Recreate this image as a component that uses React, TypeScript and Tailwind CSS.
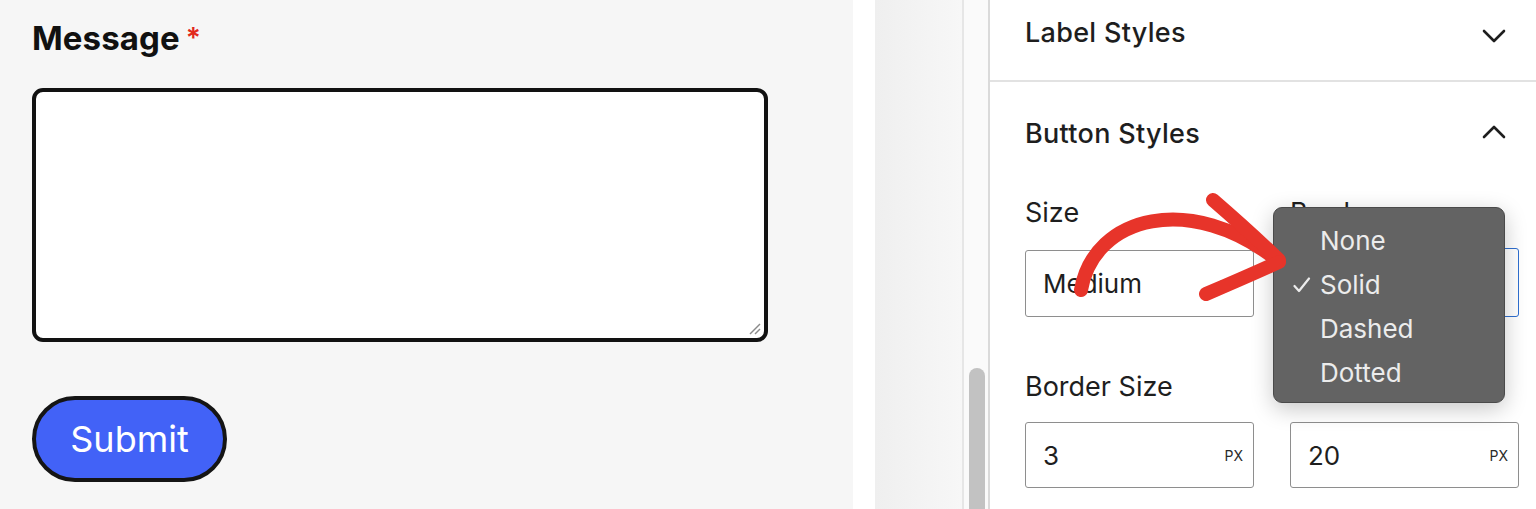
import React from 'react';

function Chevron({ up }: { up?: boolean }) {
  return (
    <svg width="24" height="14" viewBox="0 0 24 14" fill="none">
      <polyline
        points={up ? '2,12 12,2 22,12' : '2,2 12,12 22,2'}
        stroke="#1e1e1e"
        strokeWidth="2.6"
        strokeLinecap="round"
        strokeLinejoin="round"
      />
    </svg>
  );
}

function LeftPanel() {
  return (
    <div className="w-[853px] shrink-0 bg-[#f6f6f6] pl-[32px] pt-[22px]">
      <div className="flex items-start text-[33px] leading-[32px] font-bold text-[#111] tracking-[0.1px]">
        Message
        <span className="ml-[6px] text-[28px] font-semibold text-[#e2281d]">*</span>
      </div>
      <div className="relative mt-[34px] h-[254px] w-[736px] rounded-[11px] border-[4px] border-[#121212] bg-white">
        <svg className="absolute bottom-[3px] right-[3px]" width="14" height="14" viewBox="0 0 14 14">
          <line x1="3" y1="13" x2="13" y2="3" stroke="#8a8a8a" strokeWidth="1.4" />
          <line x1="8" y1="13" x2="13" y2="8" stroke="#8a8a8a" strokeWidth="1.4" />
        </svg>
      </div>
      <button className="mt-[54px] flex h-[86px] w-[195px] items-center justify-center rounded-full border-[4px] border-[#151515] bg-[#4262f7] text-[36px] font-normal text-white">
        Submit
      </button>
    </div>
  );
}

function Field({ value }: { value: string }) {
  return (
    <div className="flex h-[66px] items-center justify-between rounded-[3px] border border-[#8e8e8e] pl-[17px] pr-[10px]">
      <span className="text-[26px]">{value}</span>
      <span className="text-[14px] text-[#2a2a2a]">PX</span>
    </div>
  );
}

function RightPanel() {
  return (
    <div className="relative flex-1 bg-white">
      <div className="flex h-[82px] items-start justify-between border-b-2 border-[#e2e2e2] pl-[35px] pr-[30px] pt-[17px]">
        <span className="text-[27px] leading-[32px] font-medium tracking-[0.3px]">Label Styles</span>
        <div className="mt-[12px]">
          <Chevron />
        </div>
      </div>
      <div className="flex items-start justify-between pl-[35px] pr-[30px] pt-[36px]">
        <span className="text-[27px] leading-[32px] font-medium tracking-[0.3px]">Button Styles</span>
        <div className="mt-[7px]">
          <Chevron up />
        </div>
      </div>
      <div className="grid grid-cols-[229px_229px] gap-x-[36px] pl-[35px] pt-[47px]">
        <div className="text-[27px] leading-[32px]">Size</div>
        <div className="text-[27px] leading-[32px]">Border</div>
        <div className="mt-[21px] flex h-[67px] items-center justify-between rounded-[3px] border border-[#8e8e8e] pl-[17px] pr-[22px]">
          <span className="text-[26px]">Medium</span>
          <svg width="12" height="8" viewBox="0 0 12 8" fill="none">
            <polyline points="1,1 6,6 11,1" stroke="#1e1e1e" strokeWidth="1.6" />
          </svg>
        </div>
        <div className="mt-[19px] h-[69px] rounded-[3px] border-[1.5px] border-[#2f6fd0]" />
      </div>
      <div className="grid grid-cols-[229px_229px] gap-x-[36px] pl-[35px] pt-[54px]">
        <div className="col-span-2 text-[27px] leading-[32px]">Border Size</div>
        <div className="mt-[19px]">
          <Field value="3" />
        </div>
        <div className="mt-[19px]">
          <Field value="20" />
        </div>
      </div>

      <div className="absolute left-[283px] top-[207px] h-[196px] w-[232px] rounded-[9px] border border-[#4a4a4a] bg-[#636363] pt-[10px] shadow-[0_6px_22px_rgba(0,0,0,0.22)]">
        {['None', 'Solid', 'Dashed', 'Dotted'].map((item) => (
          <div key={item} className="relative flex h-[44px] items-center pl-[46px] text-[26px] text-[#ececec]">
            {item === 'Solid' && (
              <svg className="absolute left-[19px] top-[15px]" width="18" height="16" viewBox="0 0 18 16" fill="none">
                <polyline points="1.5,9 6,14 16,1.5" stroke="#ececec" strokeWidth="2.2" strokeLinecap="round" strokeLinejoin="round" />
              </svg>
            )}
            {item}
          </div>
        ))}
      </div>
    </div>
  );
}

export default function App() {
  return (
    <div className="relative flex h-[509px] w-[1536px] overflow-hidden font-['Inter',sans-serif] text-[#1e1e1e]">
      <LeftPanel />
      <div className="w-[22px] shrink-0 bg-white" />
      <div className="w-[87px] shrink-0 bg-gradient-to-r from-[#efefef] to-[#f7f7f7]" />
      <div className="flex w-[28px] shrink-0 flex-col border-l-2 border-r-2 border-l-[#e6e6e6] border-r-[#dadada] bg-[#fafafa] pl-[5px] pt-[368px]">
        <div className="w-[16px] flex-1 rounded-t-full bg-[#c2c2c2]" />
      </div>
      <RightPanel />

      <svg className="pointer-events-none absolute left-0 top-0" width="1536" height="509" viewBox="0 0 1536 509" fill="none">
        <path d="M1081 290 C1094 215 1192 192 1277 260" stroke="#e7342a" strokeWidth="14" strokeLinecap="round" />
        <path d="M1213 200 Q1250 232 1279 260" stroke="#e7342a" strokeWidth="14" strokeLinecap="round" />
        <path d="M1206 294 Q1246 277 1279 262" stroke="#e7342a" strokeWidth="14" strokeLinecap="round" />
      </svg>
    </div>
  );
}
